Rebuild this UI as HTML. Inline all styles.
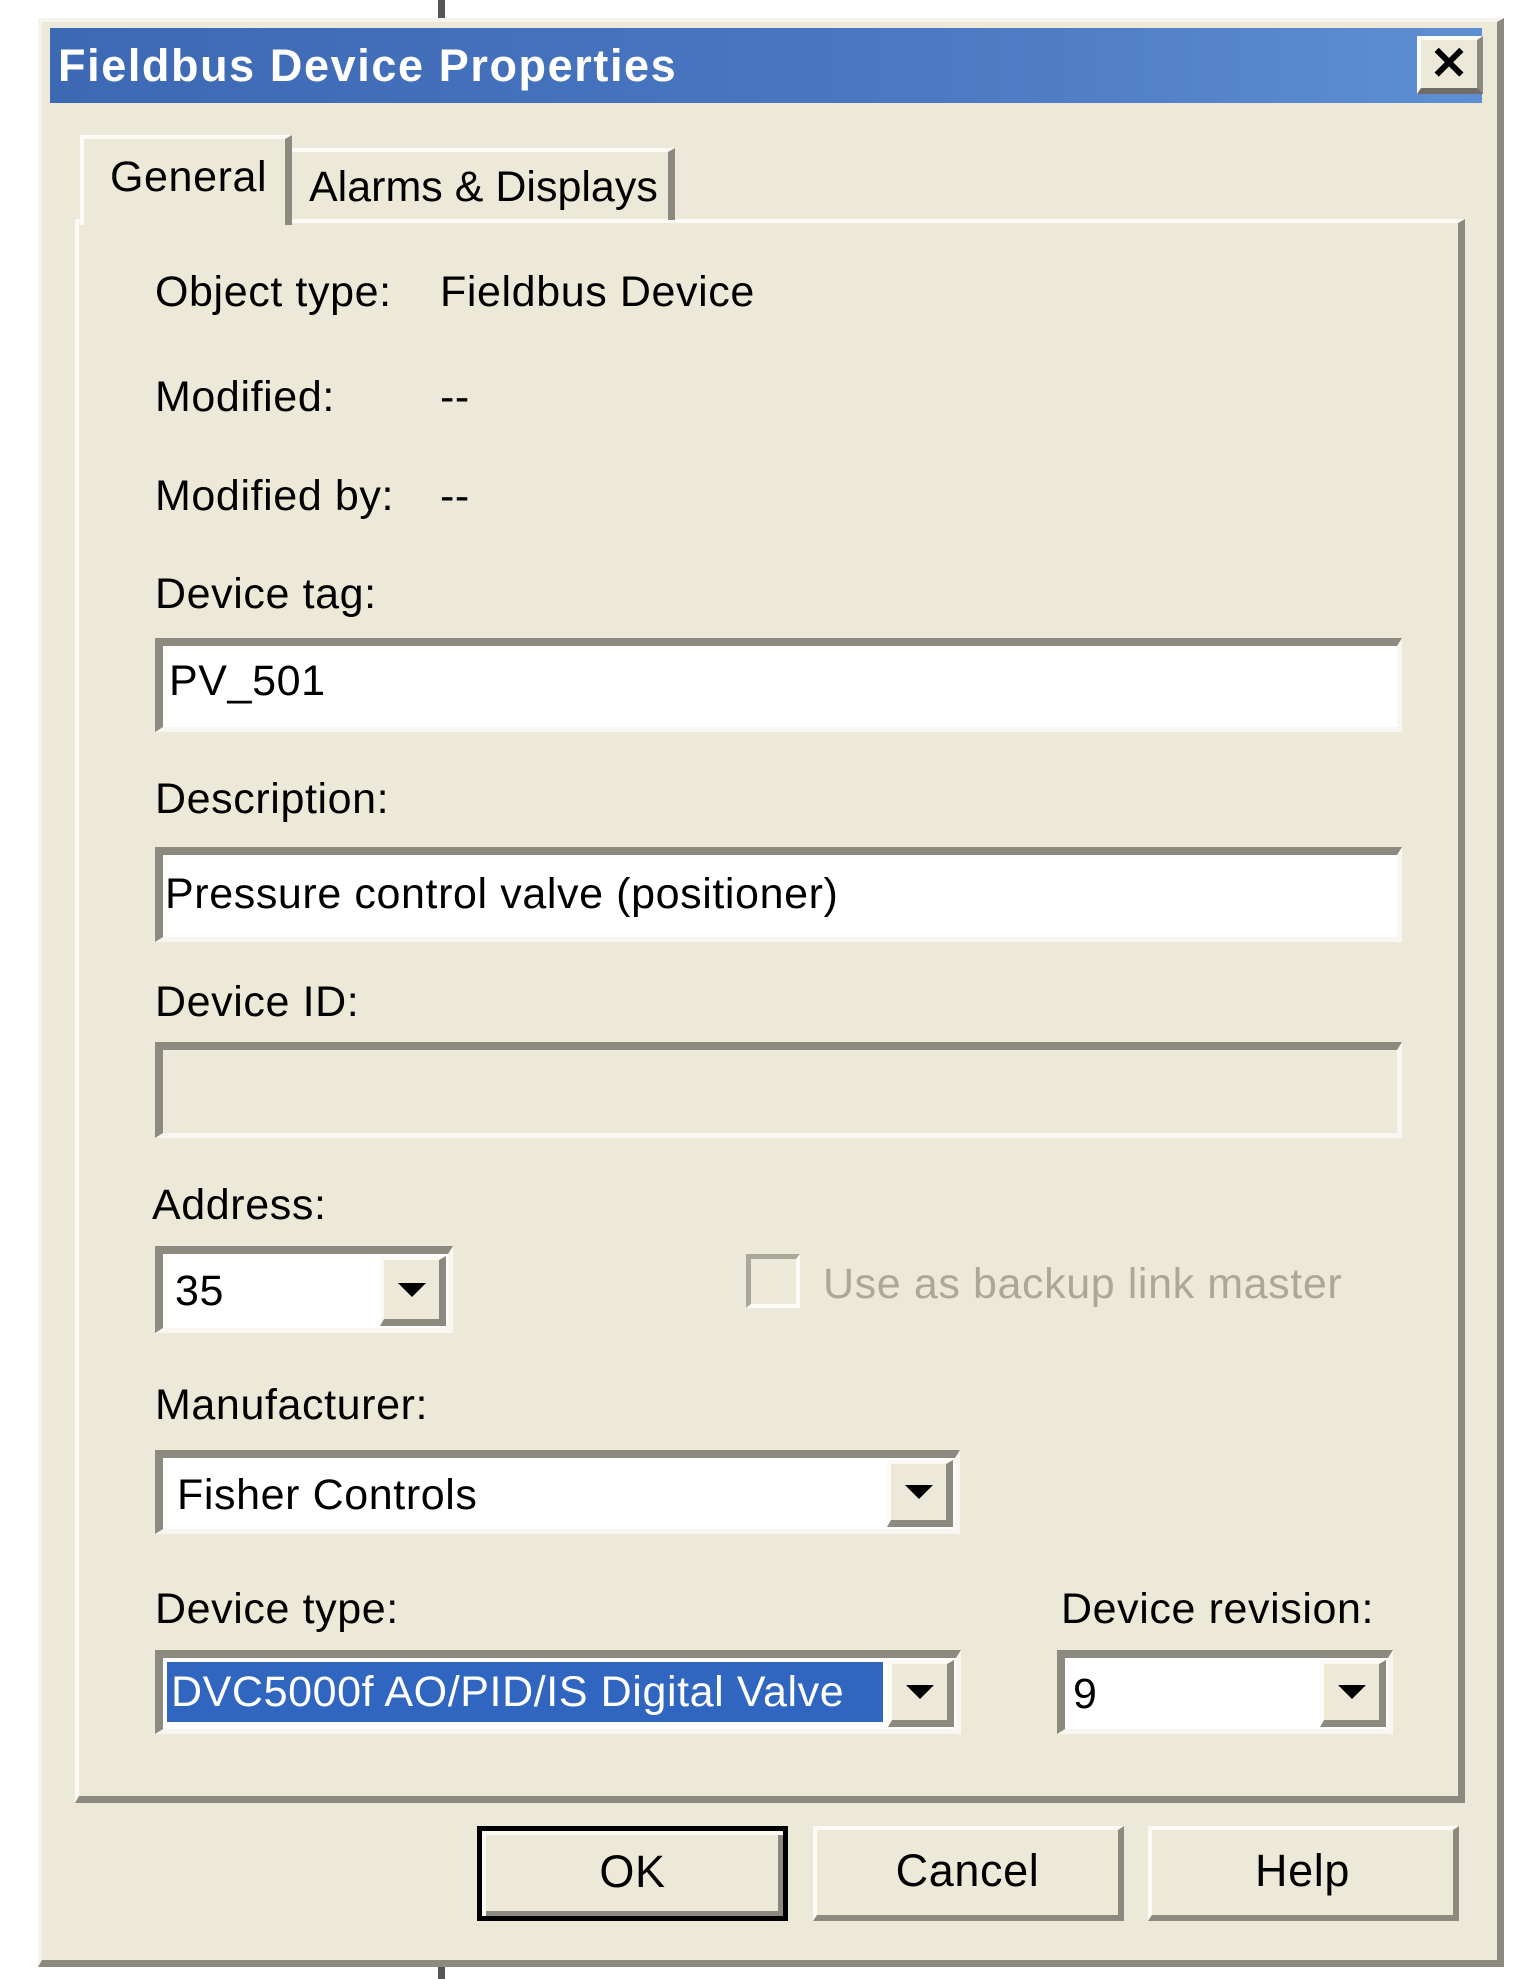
<!DOCTYPE html>
<html><head><meta charset="utf-8"><style>
*{margin:0;padding:0;box-sizing:border-box}
body{width:1529px;height:1979px;background:#fff;position:relative;overflow:hidden;font-family:"Liberation Sans",sans-serif;color:#000}
.a{position:absolute}
.lbl{position:absolute;font-size:43px;line-height:50px;white-space:nowrap;letter-spacing:0.6px}
.in{position:absolute;background:#fff;border-top:8px solid #8c897e;border-left:8px solid #8c897e;border-bottom:5px solid #f7f6f0;border-right:5px solid #f7f6f0}
.dd{position:absolute;top:2px;bottom:2px;right:2px;width:66px;background:#ece9d8;border-top:4px solid #fbfaf4;border-left:4px solid #fbfaf4;border-bottom:7px solid #8c897e;border-right:7px solid #8c897e}
.dd:after{content:"";position:absolute;left:50%;top:50%;margin-left:-14px;margin-top:-7px;border-left:14px solid transparent;border-right:14px solid transparent;border-top:14px solid #000}
.btn{position:absolute;top:1826px;height:95px;background:#ece9d8;border-top:4px solid #fbfaf4;border-left:4px solid #fbfaf4;border-bottom:6px solid #8c897e;border-right:6px solid #8c897e;font-size:45px;text-align:center;line-height:82px;letter-spacing:0.6px}
</style></head><body>
<div class="a" style="left:438px;top:0;width:7px;height:20px;background:#555"></div>
<div class="a" style="left:438px;top:1960px;width:7px;height:19px;background:#555"></div>
<div class="a" style="left:38px;top:18px;width:1466px;height:1949px;background:#ece9d8;border-top:4px solid #f5f4ee;border-left:4px solid #f5f4ee;border-right:7px solid #8c897e;border-bottom:7px solid #8c897e"></div>
<div class="a" style="left:50px;top:28px;width:1432px;height:75px;background:linear-gradient(90deg,#3d68b4,#4a78c2 60%,#5f8fd3)"></div>
<div class="a" style="left:58px;top:38px;font-size:45px;font-weight:bold;color:#fff;line-height:56px;letter-spacing:1.6px">Fieldbus Device Properties</div>
<div class="a" style="left:1417px;top:36px;width:66px;height:58px;background:#ece9d8;border-top:4px solid #fbfaf4;border-left:4px solid #fbfaf4;border-bottom:6px solid #6f6d66;border-right:6px solid #8c897e;text-align:center;font-size:46px;font-weight:bold;line-height:46px">✕</div>
<div class="a" style="left:75px;top:219px;width:1390px;height:1584px;border-top:4px solid #fbfaf4;border-left:4px solid #fbfaf4;border-right:7px solid #8c897e;border-bottom:7px solid #8c897e"></div>
<div class="a" style="left:80px;top:135px;width:212px;height:90px;background:#ece9d8;border-top:4px solid #fbfaf4;border-left:4px solid #fbfaf4;border-right:7px solid #8c897e"></div>
<div class="lbl" style="left:110px;top:152px">General</div>
<div class="a" style="left:292px;top:148px;width:383px;height:72px;border-top:4px solid #fbfaf4;border-right:7px solid #8c897e"></div>
<div class="lbl" style="left:309px;top:162px;letter-spacing:0">Alarms &amp; Displays</div>
<div class="lbl" style="left:155px;top:267px">Object type:</div>
<div class="lbl" style="left:440px;top:267px">Fieldbus Device</div>
<div class="lbl" style="left:155px;top:372px">Modified:</div>
<div class="lbl" style="left:440px;top:372px">--</div>
<div class="lbl" style="left:155px;top:471px">Modified by:</div>
<div class="lbl" style="left:440px;top:471px">--</div>
<div class="lbl" style="left:155px;top:569px">Device tag:</div>
<div class="in" style="left:155px;top:638px;width:1247px;height:94px"><span class="lbl" style="left:6px;top:10px">PV_501</span></div>
<div class="lbl" style="left:155px;top:774px">Description:</div>
<div class="in" style="left:155px;top:847px;width:1247px;height:95px"><span class="lbl" style="left:2px;top:14px">Pressure control valve (positioner)</span></div>
<div class="lbl" style="left:155px;top:977px">Device ID:</div>
<div class="in" style="left:155px;top:1042px;width:1247px;height:96px;background:#ece9d8"></div>
<div class="lbl" style="left:152px;top:1180px">Address:</div>
<div class="in" style="left:155px;top:1246px;width:298px;height:87px"><span class="lbl" style="left:12px;top:12px">35</span><div class="dd"></div></div>
<div class="a" style="left:746px;top:1254px;width:54px;height:54px;border-top:5px solid #aaa79b;border-left:5px solid #aaa79b;border-bottom:4px solid #fbfaf4;border-right:4px solid #fbfaf4"></div>
<div class="lbl" style="left:823px;top:1259px;color:#aca899">Use as backup link master</div>
<div class="lbl" style="left:155px;top:1380px">Manufacturer:</div>
<div class="in" style="left:155px;top:1450px;width:805px;height:84px"><span class="lbl" style="left:14px;top:12px">Fisher Controls</span><div class="dd"></div></div>
<div class="lbl" style="left:155px;top:1584px">Device type:</div>
<div class="lbl" style="left:1061px;top:1584px">Device revision:</div>
<div class="in" style="left:155px;top:1650px;width:806px;height:84px"><div class="a" style="left:4px;top:4px;width:716px;height:60px;background:#3166c0;outline:2px dotted #fff"></div><span class="lbl" style="left:8px;top:9px;color:#fff">DVC5000f AO/PID/IS Digital Valve</span><div class="dd"></div></div>
<div class="in" style="left:1057px;top:1650px;width:336px;height:84px"><span class="lbl" style="left:8px;top:11px">9</span><div class="dd"></div></div>
<div class="btn" style="left:477px;width:311px;border:5px solid #000;box-shadow:inset 4px 4px 0 #fbfaf4,inset -5px -5px 0 #8c897e">OK</div>
<div class="btn" style="left:813px;width:311px">Cancel</div>
<div class="btn" style="left:1148px;width:311px">Help</div>
</body></html>
